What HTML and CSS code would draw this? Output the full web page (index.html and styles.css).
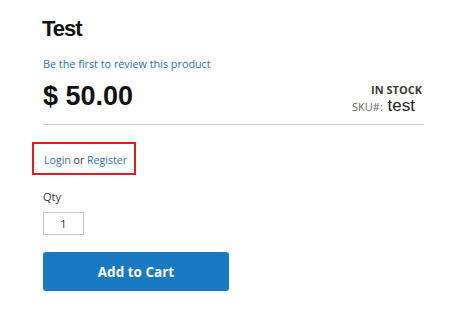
FILE: index.html
```html
<!DOCTYPE html>
<html lang="en">
<head>
    <meta charset="UTF-8">
    <title>Test</title>
    <link rel="stylesheet" href="styles.css">
</head>
<body>
    <div class="product-info">
        <h1 class="page-title">Test</h1>

        <div class="reviews">
            <a href="#">Be the first to review this product</a>
        </div>

        <div class="price-row">
            <div class="price">$ 50.00</div>
            <div class="stock-sku">
                <div class="stock">In stock</div>
                <div class="sku"><span class="sku-label">SKU#:</span> <span class="sku-value">test</span></div>
            </div>
        </div>

        <div class="login-note">
            <a href="#">Login</a> or <a href="#">Register</a>
        </div>

        <div class="box-tocart">
            <label class="qty-label" for="qty">Qty</label>
            <input class="qty" id="qty" type="text" value="1">
            <button class="tocart" type="button">Add to Cart</button>
        </div>
    </div>
</body>
</html>
```

FILE: styles.css
```css
body{
    margin:0;
    background-color:#fff;
    font-family:'Open Sans','Noto Sans',sans-serif;
    color:#333;
}

.product-info{
    width:381px;
    padding:16px 0 0 43px;
}

.page-title{
    margin:0 0 0 -1px;
    font-family:'Liberation Sans',Arial,sans-serif;
    font-size:22px;
    line-height:26px;
    font-weight:bold;
    letter-spacing:-1px;
    color:#111;
}

.reviews{
    margin-top:14px;
    font-size:10.8px;
    line-height:16px;
}

a{
    color:#2a70b3;
    text-decoration:none;
}

.price-row{
    display:flex;
    justify-content:space-between;
    align-items:flex-start;
    margin-top:9px;
    padding-bottom:8px;
    border-bottom:1px solid #c8c8c8;
}

.price{
    font-family:'Liberation Sans',Arial,sans-serif;
    font-size:27px;
    line-height:30px;
    font-weight:bold;
    color:#111;
}

.stock-sku{
    margin-top:2px;
    padding-right:2px;
    text-align:right;
}

.stock{
    font-size:11px;
    line-height:14px;
    font-weight:bold;
    text-transform:uppercase;
    color:#3a3a3a;
}

.sku{
    margin-right:7px;
    font-family:'Liberation Sans',Arial,sans-serif;
    font-size:17px;
    line-height:18px;
}

.sku-label{
    font-family:'Open Sans','Noto Sans',sans-serif;
    font-size:11px;
    color:#666;
}

.sku-value{
    color:#222;
}

.login-note{
    display:inline-block;
    margin:17px 0 0 -11px;
    padding:8px 7px 5px 10px;
    border:2px solid #e31b23;
    font-size:10.6px;
    line-height:16px;
}

.box-tocart{
    display:flex;
    flex-direction:column;
    align-items:flex-start;
    margin-top:14px;
}

.qty-label{
    font-size:11px;
    line-height:16px;
    color:#333;
}

.qty{
    box-sizing:border-box;
    width:41px;
    height:23px;
    margin-top:7px;
    padding:0;
    border:1px solid #c6c6c6;
    font-family:'Open Sans','Noto Sans',sans-serif;
    font-size:11px;
    text-align:center;
    color:#333;
}

.tocart{
    width:186px;
    height:39px;
    margin-top:17px;
    border:0;
    border-radius:3px;
    background-color:#1979c3;
    font-family:'Open Sans','Noto Sans',sans-serif;
    font-size:13.5px;
    font-weight:bold;
    color:#fff;
}
```
